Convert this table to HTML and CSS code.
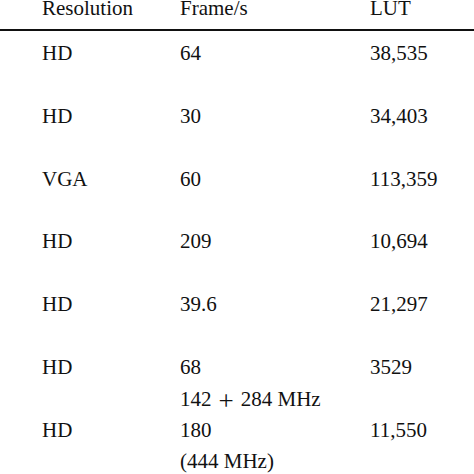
FILE: index.html
```html
<!DOCTYPE html>
<html>
<head>
<meta charset="utf-8">
<link rel="stylesheet" href="styles.css">
</head>
<body>
<div class="table">
  <div class="head">
    <div>Resolution</div><div>Frame/s</div><div>LUT</div>
  </div>
  <div class="rule"></div>
  <div class="body">
    <div>HD</div><div>64</div><div>38,535</div>
    <div>HD</div><div>30</div><div>34,403</div>
    <div>VGA</div><div>60</div><div>113,359</div>
    <div>HD</div><div>209</div><div>10,694</div>
    <div>HD</div><div>39.6</div><div>21,297</div>
    <div>HD</div><div>68</div><div>3529</div>
    <div>HD</div><div>142<span class="op">+</span>284 MHz<br>180<br>(444 MHz)</div><div>11,550</div>
  </div>
</div>
</body>
</html>
```
FILE: styles.css
```css
html, body {
  margin: 0;
  padding: 0;
  background: #fff;
}
body {
  width: 474px;
  height: 474px;
  overflow: hidden;
  font-family: "Liberation Serif", "Times New Roman", serif;
  font-size: 21px;
  color: #111;
}
.head, .body {
  display: grid;
  grid-template-columns: 138px 190px 1fr;
  padding-left: 42px;
}
.head {
  height: 29px;
  line-height: 16px;
  align-items: start;
}
.rule {
  height: 2px;
  background: #111;
}
.body {
  line-height: 31px;
  grid-auto-rows: 45.2px;
  row-gap: 17.6px;
  align-items: center;
}
.op {
  display: inline-block;
  font-size: 27px;
  line-height: 20px;
  vertical-align: -4px;
  margin: 0 7px;
}
```
